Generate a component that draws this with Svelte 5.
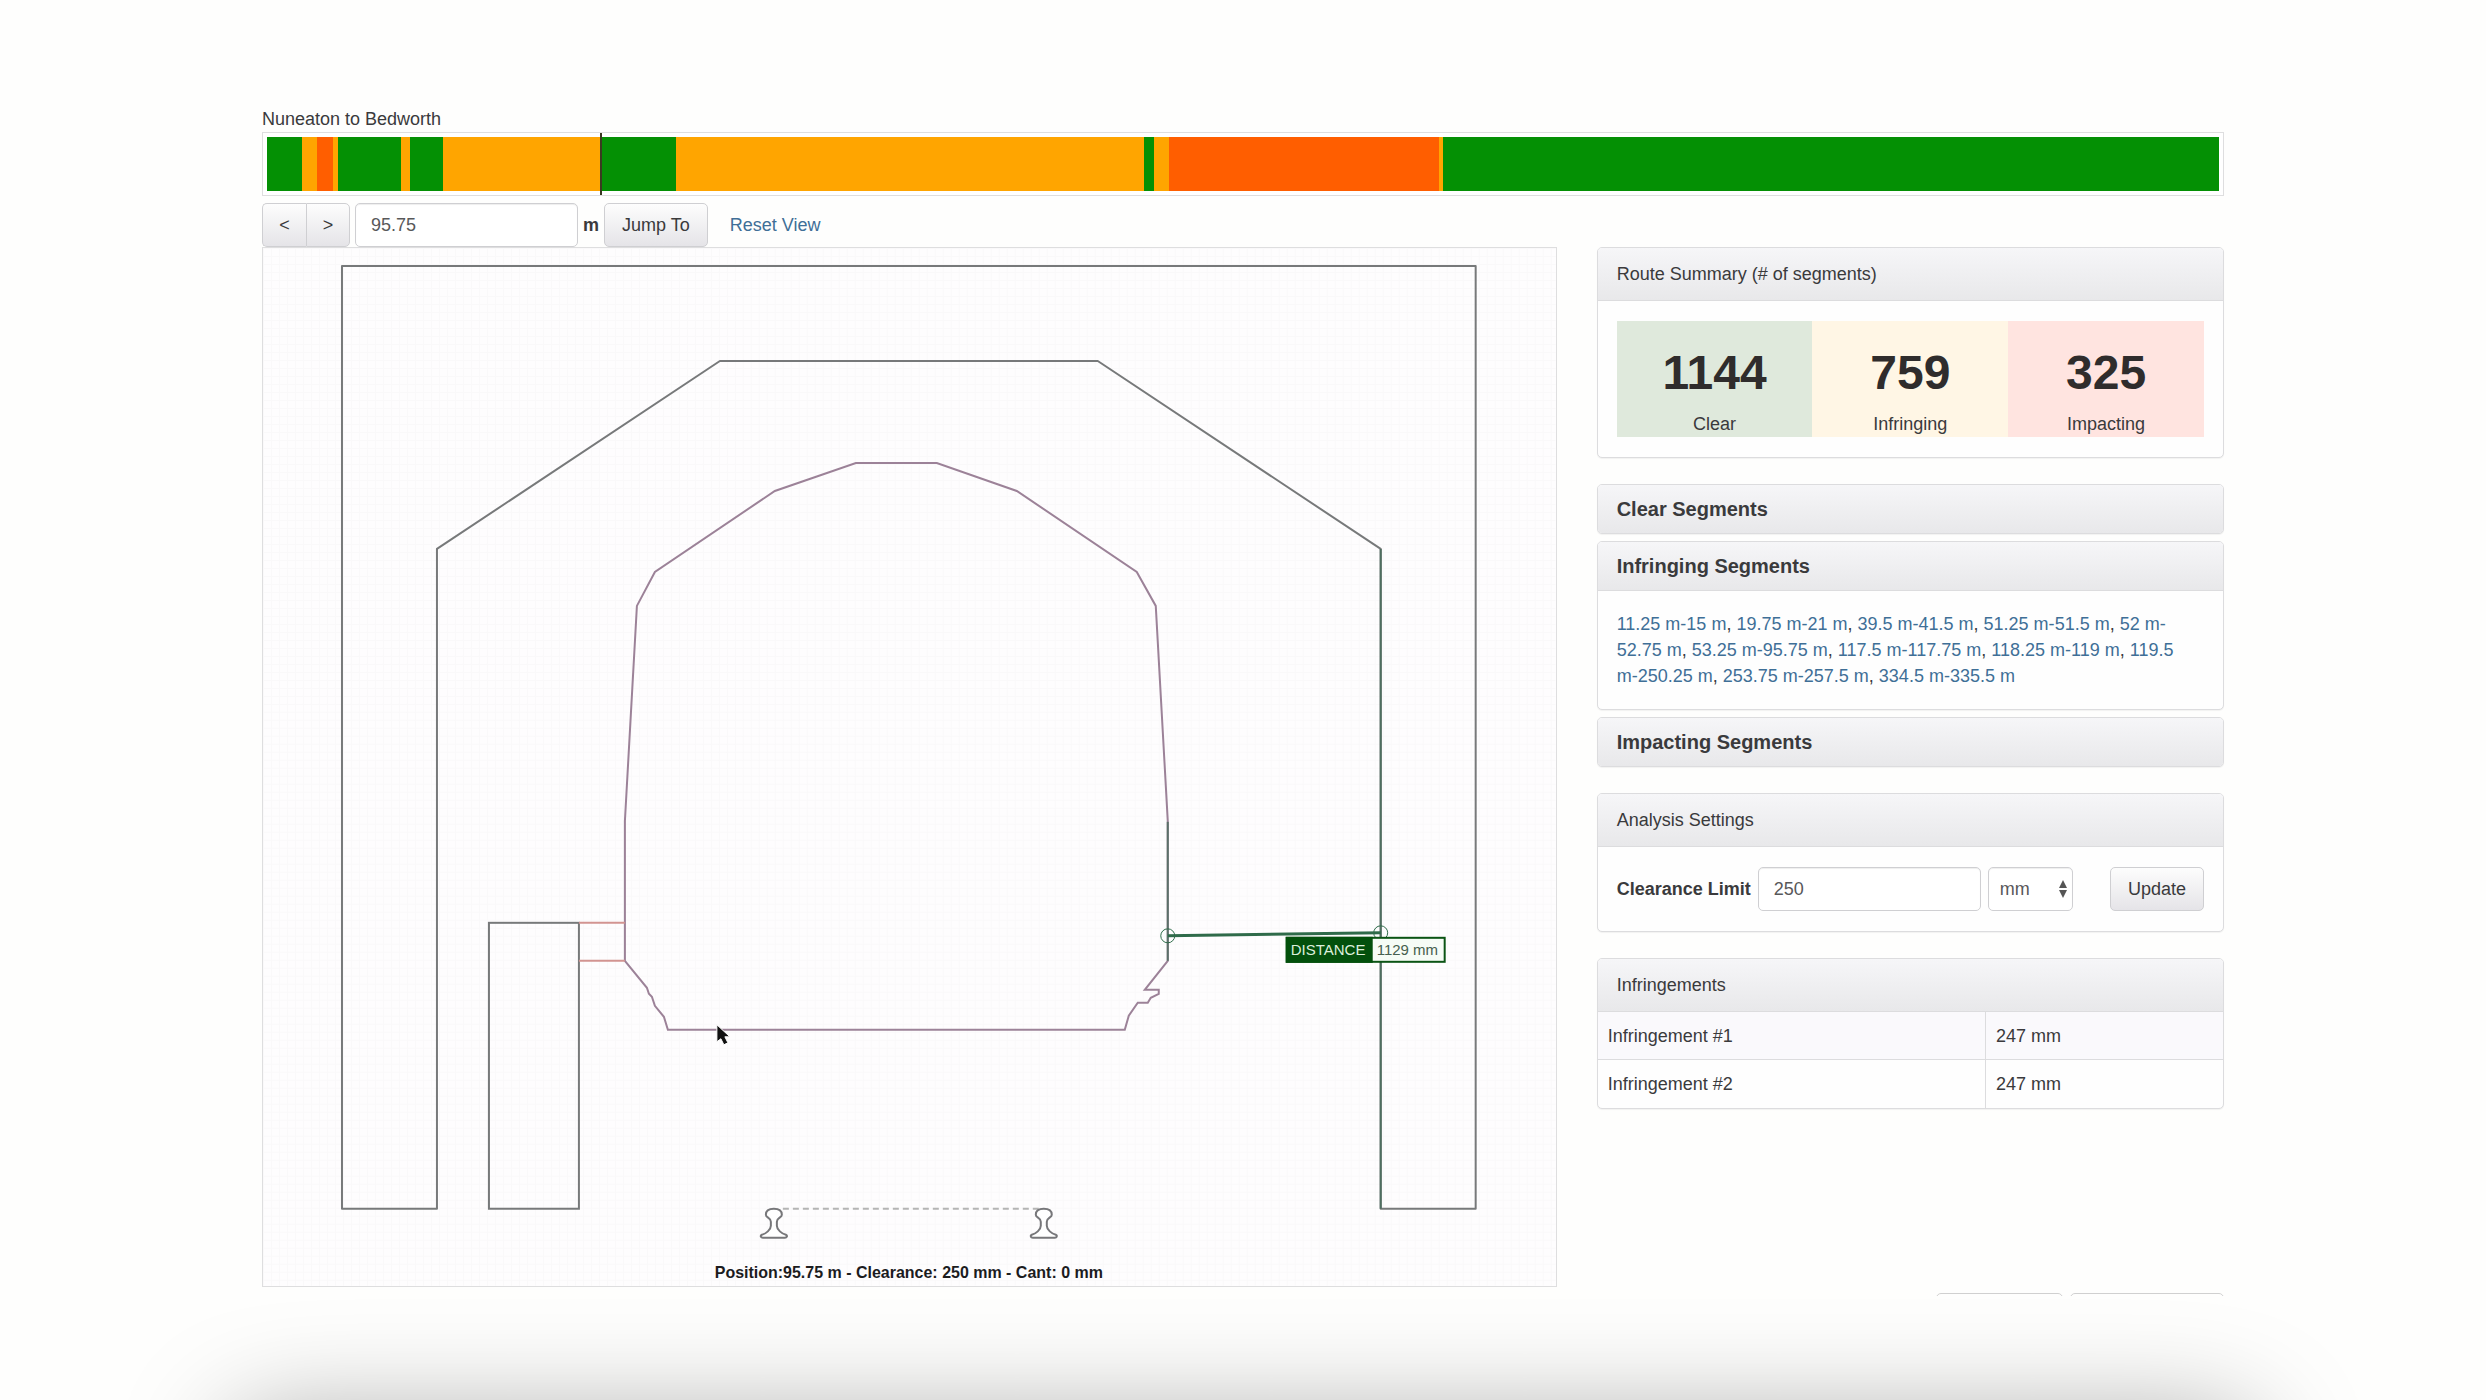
<script lang="ts">
	interface RouteSpan {
		status: 'clear' | 'infringing' | 'impacting';
		size: number;
	}

	interface Range {
		from: string;
		to: string;
	}

	const route: RouteSpan[] = [
		{ status: 'clear', size: 35 },
		{ status: 'infringing', size: 15 },
		{ status: 'impacting', size: 16 },
		{ status: 'infringing', size: 5 },
		{ status: 'clear', size: 63 },
		{ status: 'infringing', size: 9 },
		{ status: 'clear', size: 33 },
		{ status: 'infringing', size: 157 },
		{ status: 'clear', size: 76 },
		{ status: 'infringing', size: 468 },
		{ status: 'clear', size: 10 },
		{ status: 'infringing', size: 15 },
		{ status: 'impacting', size: 270 },
		{ status: 'infringing', size: 4 },
		{ status: 'clear', size: 776 }
	];

	const summary = [
		{ status: 'clear', count: 1144, label: 'Clear' },
		{ status: 'infringing', count: 759, label: 'Infringing' },
		{ status: 'impacting', count: 325, label: 'Impacting' }
	];

	const infringing: Range[] = [
		{ from: '11.25 m', to: '15 m' },
		{ from: '19.75 m', to: '21 m' },
		{ from: '39.5 m', to: '41.5 m' },
		{ from: '51.25 m', to: '51.5 m' },
		{ from: '52 m', to: '52.75 m' },
		{ from: '53.25 m', to: '95.75 m' },
		{ from: '117.5 m', to: '117.75 m' },
		{ from: '118.25 m', to: '119 m' },
		{ from: '119.5 m', to: '250.25 m' },
		{ from: '253.75 m', to: '257.5 m' },
		{ from: '334.5 m', to: '335.5 m' }
	];

	const infringements = [
		{ name: 'Infringement #1', distance: '247 mm' },
		{ name: 'Infringement #2', distance: '247 mm' }
	];

	// left edge of each running rail in the drawing
	const rails = [497, 767];

	const total = route.reduce((sum, span) => sum + span.size, 0);
	const before = route.slice(0, 8).reduce((sum, span) => sum + span.size, 0);

	let position = $state('95.75');
	let limit = $state('250');
	let unit = $state('mm');
	let markerLeft = $derived((before / total) * 100);
</script>

<div class="page">
	<main>
		<div class="route-name">Nuneaton to Bedworth</div>
		<div class="route">
			<div class="track">
				{#each route as span}
					<div class="span {span.status}" style="flex-grow: {span.size}"></div>
				{/each}
				<div class="marker" style="left: {markerLeft}%"></div>
			</div>
		</div>

		<div class="toolbar">
			<div class="btn-group">
				<button class="btn" aria-label="Previous">&lt;</button>
				<button class="btn" aria-label="Next">&gt;</button>
			</div>
			<input id="position" class="control" type="text" bind:value={position} />
			<label for="position">m</label>
			<button class="btn">Jump To</button>
			<a class="reset" href="#reset">Reset View</a>
		</div>

		<div class="columns">
			<section class="drawing">
				<svg viewBox="0 0 1293 1038" fill="none" stroke-width="2">
					<defs>
						<pattern id="grid" width="8" height="8" patternUnits="userSpaceOnUse">
							<path d="M0 .5H8M.5 0V8" stroke="#faf9fa" stroke-width="1" />
						</pattern>
					</defs>
					<rect width="1293" height="1038" fill="url(#grid)" />

					<!-- tunnel and platform -->
					<path
						d="M79 18H1213V961H1118V301L835 113H457L174 301V961H79Z"
						stroke="#77797a"
						stroke-linejoin="round"
					/>
					<rect x="226" y="675" width="90" height="286" stroke="#77797a" />
					<path d="M1118 301V961" stroke="#4f6f60" />

					<!-- vehicle gauge -->
					<path
						d="M362 573L374 358L392 324L512 243L593 215H674L754 243L874 324L893 358L905 573V713L882 742H896V746L888 750L885 755H875L866 768L862 782H405L401 769L392 758L389 749L386 746L384 740L362 713Z"
						stroke="#9c8298"
					/>
					<path d="M905 574V713" stroke="#5b7069" />
					<path d="M316 675H362M316 713H362" stroke="#d29491" />

					<!-- distance measurement -->
					<g stroke="#2f6b4a">
						<path d="M905 688L1118 685" stroke-width="3" />
						<circle cx="905" cy="688" r="7" stroke-width="1" />
						<circle cx="1118" cy="685" r="7" stroke-width="1" />
					</g>
					<rect x="1024" y="690" width="158" height="24" fill="#f6fcf6" stroke="#0b5414" />
					<rect x="1023" y="689" width="87" height="26" fill="#03500c" />
					<text x="1028" y="707" class="tag" fill="#dcefdc">DISTANCE</text>
					<text x="1114" y="707" class="tag" fill="#47604f">1129 mm</text>

					<!-- rails -->
					<path d="M520 961H776" stroke="#b4b4b4" stroke-dasharray="6 4" />
					{#each rails as x}
						<path
							transform="translate({x} 961)"
							d="M14 0C9 0 6 2 6 6C6 9 11 9 11 13V17C11 21 6 25 2 26C0 27 1 29 3 29H25C27 29 28 27 26 26C22 25 17 21 17 17V13C17 9 22 9 22 6C22 2 19 0 14 0Z"
							fill="#fff"
							stroke="#77777a"
						/>
					{/each}

					<text x="646" y="1030" class="caption" text-anchor="middle">
						Position:{position} m - Clearance: {limit} {unit} - Cant: 0 mm
					</text>

					<path
						d="M454 777V794L458 791L461 797L465 795L462 789H467Z"
						fill="#111"
						stroke="#fff"
						stroke-width="1"
					/>
				</svg>
			</section>

			<aside>
				<section class="panel">
					<header>Route Summary (# of segments)</header>
					<div class="summary">
						{#each summary as item (item.status)}
							<div class="stat {item.status}">
								<strong>{item.count}</strong>
								<span>{item.label}</span>
							</div>
						{/each}
					</div>
				</section>

				<div class="accordion">
					<section class="panel">
						<h4>Clear Segments</h4>
					</section>
					<section class="panel">
						<h4 class="open">Infringing Segments</h4>
						<p class="ranges">
							{#each infringing as range, i (range.from)}{#if i > 0}{', '}{/if}<a href="#{i}"
									>{range.from}-<wbr />{range.to}</a
								>{/each}
						</p>
					</section>
					<section class="panel">
						<h4>Impacting Segments</h4>
					</section>
				</div>

				<section class="panel">
					<header>Analysis Settings</header>
					<div class="settings">
						<label for="limit">Clearance Limit</label>
						<input id="limit" class="control" type="text" bind:value={limit} />
						<div class="select">
							<select class="control" aria-label="Unit" bind:value={unit}>
								<option value="mm">mm</option>
								<option value="cm">cm</option>
							</select>
							<svg viewBox="0 0 8 18" width="8" height="18" fill="#555">
								<path d="M4 0L8 8H0ZM4 18L0 10H8Z" />
							</svg>
						</div>
						<button class="btn">Update</button>
					</div>
				</section>

				<section class="panel">
					<header>Infringements</header>
					<table>
						<tbody>
							{#each infringements as row (row.name)}
								<tr>
									<td>{row.name}</td>
									<td>{row.distance}</td>
								</tr>
							{/each}
						</tbody>
					</table>
				</section>
			</aside>
		</div>

		<div class="cut-off">
			<div class="edge"></div>
			<div class="edge wide"></div>
		</div>
	</main>
	<div class="shelf"></div>
</div>

<style>
	:global(body) {
		background: #fefefd;
	}

	.page {
		box-sizing: border-box;
		display: flex;
		flex-direction: column;
		min-height: 100vh;
		overflow: hidden;
		font-family: 'Liberation Sans', Arial, Helvetica, sans-serif;
		font-size: 18px;
		line-height: 26px;
		color: #3a3a3c;
	}

	.page :global(*) {
		box-sizing: border-box;
	}

	main {
		padding: 106px 262px 0;
	}

	a {
		color: #3f6f97;
		text-decoration: none;
	}

	.route {
		padding: 4px;
		border: 1px solid #dededf;
		background: #fff;
	}

	.track {
		position: relative;
		display: flex;
		height: 54px;
	}

	.span {
		flex-basis: 0;
	}

	.span.clear {
		background: #049004;
	}

	.span.infringing {
		background: #ffa500;
	}

	.span.impacting {
		background: #ff5e00;
	}

	.marker {
		position: absolute;
		top: -4px;
		bottom: -4px;
		width: 2px;
		background: #3a3a20;
	}

	.toolbar {
		display: flex;
		align-items: center;
		gap: 5px;
		margin-top: 7px;
	}

	label {
		font-weight: bold;
	}

	.btn,
	.control {
		height: 44px;
		border: 1px solid #cfcfd2;
		border-radius: 5px;
		font: inherit;
		color: #3a3a3c;
	}

	.btn {
		padding: 0 17px;
		background: linear-gradient(#fdfdfd, #e5e4e8);
		cursor: pointer;
	}

	.control {
		width: 223px;
		padding: 0 15px;
		background: #fff;
		color: #58585a;
		box-shadow: inset 0 1px 1px rgba(0, 0, 0, 0.07);
	}

	.btn-group {
		display: flex;
	}

	.btn-group .btn {
		width: 44px;
		padding: 0;
	}

	.btn-group .btn:first-child {
		border-right: 0;
		border-radius: 5px 0 0 5px;
	}

	.btn-group .btn:last-child {
		border-radius: 0 5px 5px 0;
	}

	.reset {
		padding-left: 17px;
	}

	.columns {
		display: grid;
		grid-template-columns: repeat(12, 1fr);
		gap: 40px;
		align-items: start;
	}

	.drawing {
		grid-column: span 8;
		border: 1px solid #dededf;
		background: #fefdfe;
	}

	.drawing svg {
		display: block;
		width: 100%;
	}

	.tag {
		font-size: 15px;
	}

	.caption {
		font-size: 16px;
		font-weight: bold;
		fill: #1c1c1e;
	}

	aside {
		grid-column: span 4;
		display: flex;
		flex-direction: column;
		gap: 26px;
	}

	.panel {
		border: 1px solid #dcdcde;
		border-radius: 5px;
		background: #fefefe;
		box-shadow: 0 1px 1px rgba(0, 0, 0, 0.05);
		overflow: hidden;
	}

	header,
	h4 {
		margin: 0;
		padding: 13px 19px;
		background: linear-gradient(#f6f6f8, #e8e8ea);
	}

	header {
		border-bottom: 1px solid #dcdcde;
	}

	h4 {
		padding: 11px 19px;
		font-size: 20px;
	}

	h4.open {
		border-bottom: 1px solid #dcdcde;
	}

	.summary {
		display: flex;
		padding: 20px 19px;
	}

	.stat {
		flex: 1;
		display: flex;
		flex-direction: column;
		align-items: center;
		padding-top: 26px;
	}

	.stat strong {
		margin-bottom: 12px;
		font-size: 48px;
		line-height: 52px;
		color: #2f2c2c;
	}

	.stat.clear {
		background: #dfe9dc;
	}

	.stat.infringing {
		background: #fff6e5;
	}

	.stat.impacting {
		background: #ffe4e0;
	}

	.accordion {
		display: flex;
		flex-direction: column;
		gap: 7px;
	}

	.ranges {
		margin: 0;
		padding: 20px 26px 20px 19px;
	}

	.settings {
		display: flex;
		align-items: center;
		gap: 7px;
		padding: 20px 19px;
	}

	.settings .btn {
		margin-left: auto;
	}

	.select {
		position: relative;
	}

	.select .control {
		width: 85px;
		padding: 0 11px;
		appearance: none;
	}

	.select svg {
		position: absolute;
		top: 13px;
		right: 6px;
		pointer-events: none;
	}

	table {
		width: 100%;
		border-collapse: collapse;
	}

	td {
		padding: 11px 10px;
	}

	td:last-child {
		width: 38%;
		border-left: 1px solid #dcdcde;
	}

	tr:first-child td {
		padding-bottom: 10px;
		border-bottom: 1px solid #dcdcde;
		background: #faf9fc;
	}

	/* only the top edge of the next row of buttons is on screen */
	.cut-off {
		display: flex;
		justify-content: flex-end;
		gap: 7px;
		height: 3px;
		margin-top: 6px;
		overflow: hidden;
	}

	.edge {
		width: 127px;
		height: 44px;
		border: 1px solid #d0d0d0;
		border-radius: 5px;
	}

	.edge.wide {
		width: 154px;
	}

	.shelf {
		height: 120px;
		margin: auto 230px -140px;
		border-radius: 40px;
		background: #ccc;
		box-shadow: 0 0 110px rgba(0, 0, 0, 0.36);
	}
</style>
